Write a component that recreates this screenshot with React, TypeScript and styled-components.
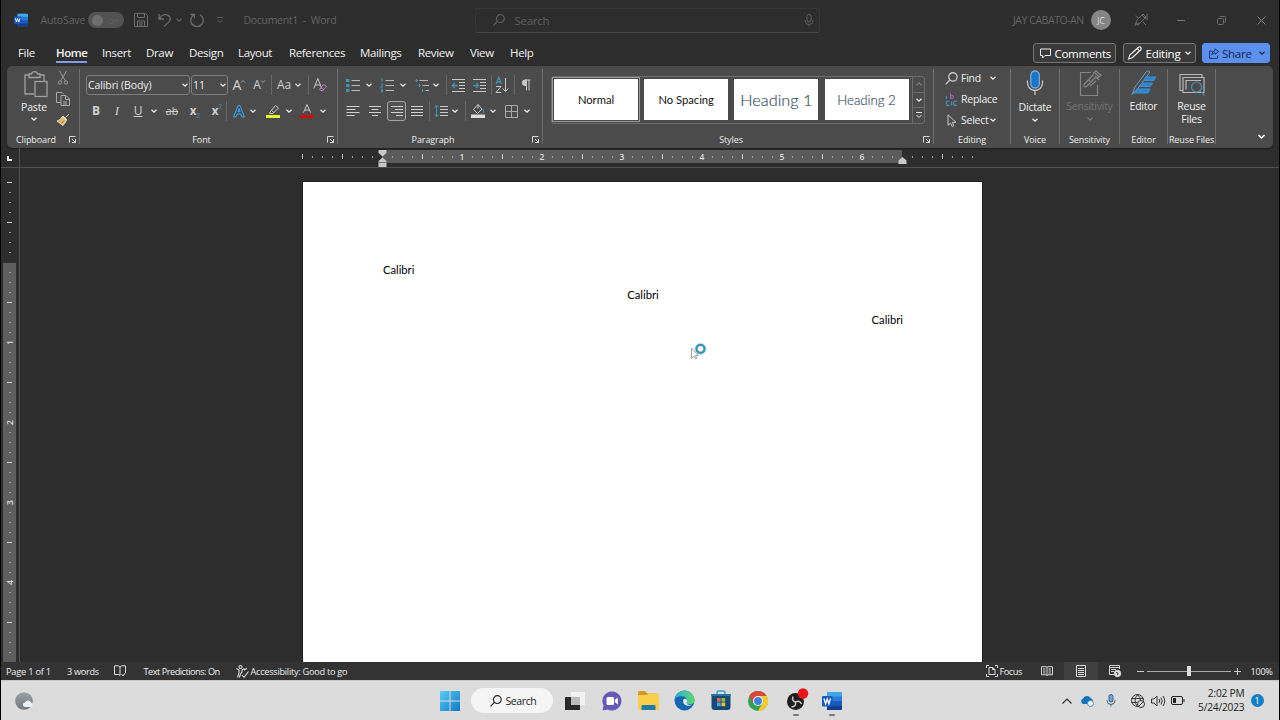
import React from "react";
import styled, { createGlobalStyle } from "styled-components";

const Global = createGlobalStyle`
  * { box-sizing: border-box; }
  body { margin: 0; background: #2d2d2d; font-family: "Open Sans", "Noto Sans", sans-serif; color: #f0f0f0; }
  svg { display: block; flex: none; overflow: visible; }
`;

const Screen = styled.div`
  width: 1280px; height: 720px; display: flex; flex-direction: column; overflow: hidden;
  background: #2d2d2d; border-left: 1px solid #000; border-right: 1px solid #000; position: relative;
`;

/* ---------- title bar ---------- */
const TitleBar = styled.header`
  height: 40px; flex: none; display: flex; align-items: center; padding-left: 12px;
  color: #646464; font-size: 10.5px; white-space: nowrap;
`;
const Slot = styled.div<{ $w?: number; $gap?: number }>`
  width: ${p => p.$w ?? 14}px; margin-left: ${p => p.$gap ?? 0}px; flex: none;
  display: flex; align-items: center; justify-content: center; white-space: nowrap;
`;
const TitleText = styled.span<{ $w: number; $gap: number; $ls?: number }>`
  width: ${p => p.$w}px; margin-left: ${p => p.$gap}px; flex: none; letter-spacing: ${p => p.$ls ?? 0}px;
`;
const Toggle = styled.div`
  width: 36px; height: 16px; margin-left: 5px; border-radius: 8px; background: #525252; flex: none;
  display: flex; align-items: center; gap: 5px; padding-left: 4px; font-size: 8px; color: #606060;
  &::before { content: ""; width: 11px; height: 11px; border-radius: 6px; background: #6f6f6f; }
`;
const SearchBox = styled.div`
  width: 345px; height: 25px; margin: 0 0 0 140px; flex: none; border: 1px solid #363636; border-bottom-color: #464646;
  border-radius: 3px; display: flex; align-items: center; padding: 0 5px 0 17px; color: #5e5e5e; font-size: 11.5px;
  span { flex: 1; padding-left: 10px; letter-spacing: -0.25px; }
`;
const Avatar = styled.div`
  width: 20px; height: 20px; margin-left: 7px; border-radius: 50%; background: #858585; color: #ddd; flex: none;
  font-size: 8.5px; display: flex; align-items: center; justify-content: center;
`;

/* ---------- tab row ---------- */
const TabRow = styled.nav`
  height: 26px; flex: none; display: flex; padding: 3px 9px 0 17px; font-size: 11.5px; color: #f2f2f2;
`;
const Tab = styled.div<{ $w: number; $active?: boolean }>`
  width: ${p => p.$w}px; flex: none; line-height: 20px; white-space: nowrap; font-weight: ${p => (p.$active ? 600 : 400)};
  letter-spacing: ${p => (p.$active ? -0.5 : -0.35)}px;
  span { display: inline-block; height: 20px; border-bottom: ${p => (p.$active ? "2px solid #7f9ce8" : "none")}; }
`;
const Actions = styled.div`
  margin-left: auto; display: flex; gap: 6.5px; height: 20px;
`;
const ActionButton = styled.button<{ $w: number; $primary?: boolean }>`
  width: ${p => p.$w}px; height: 20px; padding: 0 4px 0 6px; border-radius: 3px; display: flex; align-items: center; gap: 3px;
  font: 500 11.5px "Open Sans", sans-serif; letter-spacing: -0.25px; white-space: nowrap;
  border: 1px solid ${p => (p.$primary ? "#5c90ee" : "#757575")};
  background: ${p => (p.$primary ? "#5c90ee" : "#3a3a3a")}; color: ${p => (p.$primary ? "#14274d" : "#fff")};
  svg:last-child { margin-left: auto; }
`;

/* ---------- ribbon ---------- */
const Ribbon = styled.section`
  height: 82px; margin: 0 6px; flex: none; display: flex; background: #4b4b4b; border-radius: 5px;
  box-shadow: 0 1px 2px #1c1c1c; position: relative;
`;
const Group = styled.div<{ $w: number }>`
  width: ${p => p.$w}px; flex: none; display: flex; flex-direction: column; position: relative;
  &::after { content: ""; position: absolute; right: 0; top: 3px; bottom: 4px; width: 1px; background: #6e6e6e; }
`;
const GroupBody = styled.div`
  flex: 1; display: flex; min-height: 0;
`;
const GroupLabel = styled.div<{ $launch?: boolean }>`
  height: 16px; margin-bottom: 1px; display: flex; align-items: center; font-size: 9px; color: #eee; white-space: nowrap;
  letter-spacing: -0.1px;
  span { flex: 1; text-align: center; padding-right: ${p => (p.$launch ? 4 : 1)}px; }
  svg { margin: 1px 4px 0 0; }
`;
const ToolRows = styled.div`
  display: flex; flex-direction: column; padding-top: 8px; gap: 4px;
`;
const ToolRow = styled.div`
  display: flex; height: 22px; align-items: center; color: #ddd; font-size: 12px;
`;
const Divider = styled.i<{ $gap: number }>`
  width: 1px; height: 20px; margin-left: ${p => p.$gap}px; background: #676767; flex: none;
`;
const Combo = styled.div<{ $w: number; $gap: number }>`
  width: ${p => p.$w}px; height: 20px; margin-left: ${p => p.$gap}px; flex: none; border: 1px solid #7d7d7d; border-radius: 3px;
  display: flex; align-items: center; justify-content: space-between; padding: 0 1px 0 1px; font-size: 10.5px; color: #eee; white-space: nowrap;
  letter-spacing: -0.1px;
`;
const Selected = styled.div`
  width: 19px; height: 20px; margin-left: 5px; flex: none; border: 1px solid #a5a5a5; border-radius: 3px;
  display: flex; align-items: center; justify-content: center; background: #525252;
`;
const PasteColumn = styled.div`
  width: 54px; display: flex; flex-direction: column; align-items: center; padding-top: 5px; font-size: 10.5px; line-height: 16px;
  > svg:first-child { margin-left: 4px; }
  > span { margin-top: 1px; letter-spacing: -0.2px; }
  > svg:last-child { margin-top: 2px; }
`;
const ClipTools = styled.div`
  display: flex; flex-direction: column; align-items: center; margin-left: -5px; padding-top: 5px; gap: 7px;
`;
const BigButton = styled.div<{ $off?: boolean }>`
  flex: 1; display: flex; flex-direction: column; align-items: center; padding: 4px 1px 0 0; font-size: 10.5px; line-height: 13px;
  text-align: center; color: ${p => (p.$off ? "#737373" : "#f0f0f0")}; white-space: nowrap; letter-spacing: -0.25px;
  > span { margin-top: 4px; }
  > svg:nth-child(3) { margin-top: 4px; }
`;
const EditList = styled.div`
  display: flex; flex-direction: column; padding: 1.5px 0 0 11px; font-size: 10.5px; letter-spacing: -0.25px;
`;
const EditItem = styled.div<{ $gap?: number }>`
  height: 21.5px; display: flex; align-items: center;
  > svg:first-child { width: 13px; }
  span { margin: 0 ${p => p.$gap ?? 0}px 0 3px; }
`;
const Gallery = styled.div`
  width: 374px; height: 48px; margin: 10px 0 0 8px; border: 1px solid #6d6d6d; border-radius: 3px; display: flex;
`;
const Cards = styled.div`
  display: flex; gap: 6.2px; padding: 2px 0 0 2px; flex: 1;
`;
const StyleCard = styled.div<{ $sel?: boolean; $size: number; $heading?: boolean }>`
  width: 84px; height: 41px; flex: none; background: #fff; display: flex; align-items: center; justify-content: center;
  font-family: Lato, sans-serif; font-size: ${p => p.$size}px; font-weight: ${p => (p.$heading ? 300 : 400)};
  color: ${p => (p.$heading ? "#32495f" : "#111")}; white-space: nowrap;
  -webkit-text-stroke: ${p => (p.$heading ? "0.15px #32495f" : "0")};
  outline: ${p => (p.$sel ? "1px solid #999" : "none")}; outline-offset: 1px;
`;
const GalleryNav = styled.div`
  width: 12px; border-left: 1px solid #6d6d6d; display: flex; flex-direction: column;
  div { flex: 1; display: flex; align-items: center; justify-content: center; }
  div + div { border-top: 1px solid #6d6d6d; }
`;
const RibbonEnd = styled.div`
  flex: 1; display: flex; align-items: flex-end; justify-content: flex-end; padding: 0 8px 9px 0;
`;

/* ---------- rulers and document ---------- */
const RulerRow = styled.div`
  height: 20px; flex: none; border-bottom: 1px solid #505050; display: flex; position: relative;
`;
const TabStop = styled.div`
  width: 19px; border-right: 1px solid #505050; padding: 8px 0 0 6px;
`;
const HRuler = styled.div`
  display: flex; margin: 2px 0 0 277px; height: 13px;
`;
const HCell = styled.div<{ $fill: string }>`
  width: 10px; height: 13px; display: flex; align-items: center; justify-content: center;
  font-size: 8.5px; font-weight: 600; color: #ddd; background: ${p => p.$fill};
`;
const HTick = styled.i<{ $h: number }>`
  width: 1px; height: ${p => p.$h}px; background: ${p => (p.$h > 3 ? "#cfcfcf" : "#999")};
`;
const Marker = styled.div<{ $x: number; $y: number }>`
  position: absolute; left: ${p => p.$x}px; top: ${p => p.$y}px;
`;
const Workspace = styled.main`
  height: 494px; flex: none; display: flex; overflow: hidden;
`;
const VRuler = styled.div`
  width: 19px; flex: none; border-right: 1px solid #505050; padding: 9px 0 0 2px; display: flex; flex-direction: column;
`;
const VCell = styled.div<{ $fill: string }>`
  width: 13px; height: 10px; flex: none; display: flex; align-items: center; justify-content: center;
  background: ${p => p.$fill}; font-size: 8.5px; font-weight: 600; color: #ddd;
  span { transform: rotate(-90deg); }
`;
const VTick = styled.i<{ $w: number }>`
  height: 1px; width: ${p => p.$w}px; background: ${p => (p.$w > 3 ? "#cfcfcf" : "#999")};
`;
const Page = styled.article`
  width: 679px; height: 480px; margin: 14px 0 0 283px; background: #fff; padding: 79px 79px 0 80px; color: #000;
  font: 11.2px/25px Lato, sans-serif; position: relative;
  box-shadow: 0 0 0 1px #202020;
`;
const Para = styled.p<{ $align: string }>`
  margin: 0; text-align: ${p => p.$align}; height: 25px; line-height: 17px;
`;
const Pointer = styled.div`
  position: absolute; left: 387px; top: 159px;
`;

/* ---------- status bar ---------- */
const StatusBar = styled.footer`
  height: 18px; flex: none; background: #333; display: flex; align-items: center; font-size: 9.2px; padding-left: 5px;
  white-space: nowrap; color: #eee;
`;
const StatusText = styled.span<{ $w: number; $gap?: number; $ls?: number }>`
  width: ${p => p.$w}px; margin-left: ${p => p.$gap ?? 0}px; flex: none; letter-spacing: ${p => p.$ls ?? 0}px;
`;
const ViewButton = styled.div<{ $on?: boolean }>`
  width: 34px; height: 18px; flex: none; display: flex; align-items: center; justify-content: center;
  background: ${p => (p.$on ? "#3f3f3f" : "transparent")};
`;
const ZoomTrack = styled.div`
  width: 84px; height: 1px; background: #aaa; margin-left: 3px; flex: none; display: flex; align-items: center; justify-content: center;
  &::after { content: ""; width: 4px; height: 10px; background: #ddd; }
`;

/* ---------- taskbar ---------- */
const Taskbar = styled.div`
  height: 40px; flex: none; background: #dcdcdc; border-top: 1px solid #c8c8c8; display: flex; align-items: center; color: #222;
`;
const SearchPill = styled.div`
  width: 82px; height: 25px; margin-left: 11px; border-radius: 13px; background: #f5f5f5; flex: none;
  display: flex; align-items: center; padding-left: 19px; gap: 4px; font-size: 10.5px; letter-spacing: -0.4px;
`;
const TaskApp = styled.div<{ $gap: number; $run?: boolean }>`
  width: 22px; height: 39px; margin-left: ${p => p.$gap}px; flex: none; display: flex; align-items: center; justify-content: center; position: relative;
  &::after { content: ""; display: ${p => (p.$run ? "block" : "none")}; position: absolute; bottom: 4px; left: 8px; width: 6px; height: 2px; border-radius: 1px; background: #777; }
`;
const Clock = styled.div`
  width: 58px; margin-left: 2px; font-size: 10.2px; line-height: 13.5px; letter-spacing: -0.2px; flex: none;
  white-space: nowrap; display: flex; flex-direction: column; align-items: flex-end;
`;
const Badge = styled.div`
  width: 13px; height: 13px; margin-left: 6px; border-radius: 50%; background: #1180c4; color: #fff; font-size: 9px; line-height: 13px; text-align: center;
`;

/* ---------- icons ---------- */
type IconProps = { w?: number; h?: number; c?: string; sw?: number; children: React.ReactNode };
const Icon = ({ w = 14, h = 14, c = "#c8c8c8", sw = 1, children }: IconProps) => (
  <svg width={w} height={h} viewBox={`0 0 ${w} ${h}`} fill="none" stroke={c} strokeWidth={sw}>{children}</svg>
);
const Chevron = ({ c = "#eee", up = false }: { c?: string; up?: boolean }) => (
  <Icon w={6} h={4} c={c} sw={1.3}><path d={up ? "M.5 3.2 3 .8l2.5 2.4" : "M.5.8 3 3.2 5.5.8"} /></Icon>
);
const Chev = ({ gap }: { gap: number }) => <Slot $w={6} $gap={gap}><Chevron /></Slot>;
const Launcher = () => (
  <Icon w={7} h={7} c="#d8d8d8"><path d="M.5 6.500v-6h6M3 3l3.500 3.500M6.500 3v3.500H3" /></Icon>
);
const Lens = ({ c, s = 12 }: { c: string; s?: number }) => (
  <svg width={s} height={s} viewBox="0 0 12 12" fill="none" stroke={c} strokeWidth="1.2"><circle cx="7.300" cy="4.600" r="3.900" /><path d="M4.400 7.400.6 11.400" /></svg>
);
const MicSmall = ({ c, fill = "none" }: { c: string; fill?: string }) => (
  <Icon w={10} h={13} c={c}><rect x="3" y=".5" width="4" height="7.500" rx="2" fill={fill} /><path d="M1 6v.5a4 4 0 0 0 8 0V6M5 10.500v2" /></Icon>
);
const WordLogo = ({ s }: { s: number }) => (
  <svg width={s} height={s} viewBox="0 0 20 20">
    <rect x="5" y="1" width="15" height="18" rx="1.500" fill="#2b7cd3" />
    <path d="M5 1h13.500q1.500 0 1.500 1.500V5.500H5z" fill="#41a5ee" /><path d="M5 10h15v4.500H5z" fill="#185abd" /><path d="M5 14.500h15v3q0 1.500-1.500 1.500H5z" fill="#103f91" />
    <rect x="0" y="5" width="10.500" height="10.500" rx="1" fill="#185abd" />
    <path d="M2 7.500l1.600 5.400L5.200 8l1.700 4.900L8.500 7.500" fill="none" stroke="#fff" strokeWidth="1.300" />
  </svg>
);
const B = "#4590b0";

const Bullets = () => <Icon c="#b8b8b8"><path d="M5.500 2.500H14M5.500 7.500H14M5.500 12.500H14" /><g fill={B} stroke="none"><rect y="1" width="3.500" height="3" /><rect y="6" width="3.500" height="3" /><rect y="11" width="3.500" height="3" /></g></Icon>;
const Numbering = () => <Icon c="#b8b8b8"><path d="M5.500 2.500H14M5.500 7.500H14M5.500 12.500H14" /><path stroke={B} d="M1 1l1-.5V4M.5 6h2v1.500l-2 1.500h2.500M.5 11h2v3H.5M1 12.500h1.500" /></Icon>;
const Multi = () => <Icon c="#b8b8b8"><path d="M4.500 2.500H13M7.500 7.500H14M10.500 12.500H14" /><path stroke={B} d="M.5 2.500h2.500M1.500 1v3M3.500 7.500h2.500M4.500 6v3M7.500 11v3" /></Icon>;
const Dent = ({ flip }: { flip?: boolean }) => (
  <Icon><path d="M1 1.500H14M8 4.500H14M8 7.500H14M8 10.500h6M1 13.500H14" /><path stroke={B} strokeWidth="1.300" d={flip ? "M1 7.500h5.500M4 5l2.500 2.500L4 10" : "M6.500 7.500h-5M3.800 5 1.300 7.500 3.800 10"} /></Icon>
);
const Align = ({ d }: { d: string }) => <Icon c="#d0d0d0"><path d={d} /></Icon>;

const SortIcon = () => (
  <Icon w={14} h={16}><path stroke={B} strokeWidth="1.300" d="M1 7 3.800 .5 6.500 7M2 5h3.600" /><path d="M1 9.500h5L1 15.500h5.300M10.500 1v13M7.800 11.500l2.700 3 2.700-3" /></Icon>
);
const FontIcon = styled.span<{ $size?: number; $bold?: boolean; $italic?: boolean; $deco?: string }>`
  font-size: ${p => p.$size ?? 12}px; font-weight: ${p => (p.$bold ? 700 : 400)}; font-style: ${p => (p.$italic ? "italic" : "normal")};
  font-family: ${p => (p.$italic ? '"Liberation Serif", serif' : "inherit")};
  text-decoration: ${p => p.$deco ?? "none"}; line-height: 16px; color: #d0d0d0;
  sub, sup { font-size: 6.5px; color: ${B}; line-height: 0; }
  sub { vertical-align: -3px; }
  sup { vertical-align: 6px; }
`;
const GrowA = ({ s, up }: { s: number; up?: boolean }) => (
  <Slot $gap={up ? 4 : 6}><FontIcon $size={s}>A</FontIcon><Icon w={4} h={10} c="#8fa9b5"><path d={up ? "M0 2.500 2 .5l2 2" : "M0 .5l2 2 2-2"} /></Icon></Slot>
);

const hCells = Array.from({ length: 68 }, (_, i) => i);
const vCells = Array.from({ length: 49 }, (_, i) => i);
const hFill = (p: number) => {
  if (p === 0) return "linear-gradient(90deg, transparent 50%, #5b5b5b 50%)";
  if (p === 52) return "linear-gradient(90deg, #5b5b5b 50%, transparent 50%)";
  return p > 0 && p < 52 ? "#5b5b5b" : "transparent";
};
const vFill = (p: number) => {
  if (p === 0) return "linear-gradient(transparent 60%, #5e5e5e 60%)";
  return p > 0 ? "#5e5e5e" : "transparent";
};

const tabs: [string, number][] = [["File", 38], ["Home", 46], ["Insert", 44], ["Draw", 43], ["Design", 49], ["Layout", 51], ["References", 71], ["Mailings", 58], ["Review", 52], ["View", 40], ["Help", 40]];

export default function App() {
  return (
    <Screen>
      <Global />
      <TitleBar>
        <Slot $w={15}><WordLogo s={14} /></Slot>
        <TitleText $w={42} $gap={12.5} $ls={-0.15}>AutoSave</TitleText>
        <Toggle>Off</Toggle>
        <Slot $gap={10.5}><Icon c="#6c6c6c"><path d="M.5.5h11l2 2v11H.5zM3.500 .5v4h7v-4M3.500 13.500V8h7v5.500M5 10h4M5 12h4" /></Icon></Slot>
        <Slot $gap={10}><Icon c="#6c6c6c" sw={1.3}><path d="M1 1v5h5M1.500 5.500C4 1 9 .5 11.500 3.500c2 3 .5 5-5.500 10" /></Icon></Slot>
        <Slot $w={6} $gap={4}><Chevron c="#606060" /></Slot>
        <Slot $gap={8}><Icon c="#6c6c6c" sw={1.3}><path d="M10 1.700A6.300 6.300 0 1 1 4 1.700M.5 1.500H4.300V5.300" /></Icon></Slot>
        <Slot $w={6} $gap={12.5}><Icon w={6} h={7} c="#606060"><path d="M0 .5h6M.5 3 3 5.500 5.500 3" /></Icon></Slot>
        <TitleText $w={91} $gap={21} $ls={-0.3}>Document1 &nbsp;-&nbsp; Word</TitleText>
        <SearchBox><Lens c="#5e5e5e" /><span>Search</span><MicSmall c="#5e5e5e" /></SearchBox>
        <TitleText $w={71} $gap={193.5} $ls={-0.45}>JAY CABATO-AN</TitleText>
        <Avatar>JC</Avatar>
        <Slot $gap={22.5}><Icon c="#6c6c6c"><path d="M1 12.500 3 7l6-6 3 3-6 6zM8 2l4 4M2 10l3 2M1.500 3 5 5.500M9 9l3 3M13 7V1" /></Icon></Slot>
        <Slot $w={8} $gap={29}><Icon w={8} h={8} c="#777"><path d="M0 4.500h8" /></Icon></Slot>
        <Slot $w={9} $gap={32}><Icon w={9} h={9} c="#6c6c6c"><rect x=".5" y="2.500" width="6" height="6" rx="1" /><path d="M2.500 1q0-.5 1-.5h4q1 0 1 1v4q0 1-1 1" /></Icon></Slot>
        <Slot $w={9} $gap={31}><Icon w={9} h={9} c="#888"><path d="M.5.5l8 8M8.500 .5l-8 8" /></Icon></Slot>
      </TitleBar>

      <TabRow>
        {tabs.map(([t, w]) => (
          <Tab key={t} $w={w} $active={t === "Home"}><span>{t}</span></Tab>
        ))}
        <Actions>
          <ActionButton $w={83}><Icon w={11} h={11} c="#eee"><path d="M.5 1h10v6.500H5L2.500 10V7.500h-2z" /></Icon>Comments</ActionButton>
          <ActionButton $w={73}><Icon w={13} h={12} c="#eee" sw={1.2}><path d="M-1.300 11.800-.3 8.200 8.500.3q1.400-.8 2.300.2t0 2.300L2.300 10.800zM7.300 1.600l2.300 2.300" /></Icon>Editing<Chevron /></ActionButton>
          <ActionButton $w={68} $primary><Icon w={10} h={11} c="#1c3768"><path d="M3.500 3H.6v7.400H8.500V7.500M6 .8 9.500 3.500 6 6.300V4.800Q4 4.800 2.800 7 3 2.800 6 2.500z" /></Icon>Share<Chevron c="#14274d" /></ActionButton>
        </Actions>
      </TabRow>

      <Ribbon>
        <Group $w={73}>
          <GroupBody>
            <PasteColumn>
              <Icon w={24} h={27} c="#a0a0a0" sw={1.3}><path d="M5 4H1v19h9M16 4h4v6M5 6.500V3h2.500Q8 .7 10.500 .7T13.500 3H16v3.500z" /><rect x="11" y="10.500" width="12" height="15" /></Icon>
              <span>Paste</span><Chevron />
            </PasteColumn>
            <ClipTools>
              <Icon w={14} h={14} c="#999"><path d="M3.500 0l6 10M10.500 0l-6 10" /><circle cx="4" cy="11.500" r="1.700" /><circle cx="10" cy="11.500" r="1.700" /></Icon>
              <Icon w={14} h={14} c="#aaa"><path d="M5 10.500H.5v-10H6L7.500 2M5 3.500h5l3.500 3.500v6.500H5zM9.500 4v3.500H13M7 10h4M7 12h4" /></Icon>
              <Icon w={14} h={14} c="#ddd"><path d="M13 1 9.500 4.500M7 3l4 4" /><path d="M6.500 3.500 10.500 7.500 7 12.500 1 8Q4 7.500 6.500 3.500z" fill="#e2bd6c" stroke="#efe0b8" /><path d="M3 8.500l1-1M5.500 10.500 8 7.500" stroke="#8a6d32" /></Icon>
            </ClipTools>
          </GroupBody>
          <GroupLabel $launch><span>Clipboard</span><Launcher /></GroupLabel>
        </Group>

        <Group $w={258}>
          <GroupBody>
            <ToolRows>
              <ToolRow>
                <Combo $w={104} $gap={6}>Calibri (Body)<Chevron /></Combo>
                <Combo $w={37} $gap={1}>11<Chevron /></Combo>
                <GrowA s={14} up /><GrowA s={12} />
                <Divider $gap={5} />
                <Slot $gap={5}><FontIcon $size={12}>Aa</FontIcon></Slot><Chev gap={4} />
                <Divider $gap={7} />
                <Slot $gap={4}><Icon><path d="M.8 10.500 4.800 .5l4 10M2.200 7h5" /><path stroke="#c07fc4" d="M6.500 11.500l4-5 3 2-4 4.500zM8 9.800l3 2" /></Icon></Slot>
              </ToolRow>
              <ToolRow>
                <Slot $gap={9}><FontIcon $bold>B</FontIcon></Slot>
                <Slot $gap={7}><FontIcon $italic $size={13}>I</FontIcon></Slot>
                <Slot $gap={7}><FontIcon $deco="underline">U</FontIcon></Slot><Chev gap={6} />
                <Slot $gap={8}><FontIcon $size={10.5} $deco="line-through">ab</FontIcon></Slot>
                <Slot $gap={9}><FontIcon $size={11.5}><b>x</b><sub>2</sub></FontIcon></Slot>
                <Slot $gap={8}><FontIcon $size={11.5}><b>x</b><sup>2</sup></FontIcon></Slot>
                <Divider $gap={2} />
                <Slot $gap={5}><Icon w={12} h={13} c="#55a5dc"><path d="M.6 12 5 .6h2L11.400 12H9L8 9H4l-1 3zM4.800 6.800h2.400L6 3.500z" fill="#22506f" /></Icon></Slot><Chev gap={4} />
                <Slot $gap={10}><Icon w={14} h={14}><path d="M4 8 9.500 1.500l3 2.500L7 9.500H3.500zM5.500 6.500l2.500 2" /><rect x="0" y="11" width="14" height="3" fill="#e9f52a" stroke="none" /></Icon></Slot><Chev gap={6} />
                <Slot $gap={8}><Icon w={14} h={14}><path d="M3.500 8.500 7 .5l3.500 8M4.800 6h4.500" /><rect x="0" y="11" width="14" height="3" fill="#d00b0b" stroke="none" /></Icon></Slot><Chev gap={6} />
              </ToolRow>
            </ToolRows>
          </GroupBody>
          <GroupLabel $launch><span>Font</span><Launcher /></GroupLabel>
        </Group>

        <Group $w={205}>
          <GroupBody>
            <ToolRows>
              <ToolRow>
                <Slot $gap={8}><Bullets /></Slot><Chev gap={6} />
                <Slot $gap={8}><Numbering /></Slot><Chev gap={6} />
                <Slot $gap={9}><Multi /></Slot><Chev gap={4} />
                <Divider $gap={7} />
                <Slot $gap={4}><Dent /></Slot><Slot $gap={7}><Dent flip /></Slot>
                <Divider $gap={5} />
                <Slot $gap={3}><SortIcon /></Slot>
                <Divider $gap={5} />
                <Slot $gap={4}><Icon w={10} h={12}><path d="M5.500 1v10.500M8 1v10.500M9.500 1H4" /><path d="M5.500 1H4a2.500 2.500 0 0 0 0 5.500h1.500z" fill="#c8c8c8" /></Icon></Slot>
              </ToolRow>
              <ToolRow>
                <Slot $gap={8}><Align d="M.5 2.500h13M.5 5.500h9M.5 8.500h13M.5 11.500h8" /></Slot>
                <Slot $gap={8}><Align d="M1 2.500h12M3.500 5.500h7M1 8.500h12M4 11.500h6" /></Slot>
                <Selected><Align d="M1 2.500h12M5 5.500h8M1 8.500h12M6 11.500h7" /></Selected>
                <Slot $gap={4}><Align d="M1 2.500h12M1 5.500h12M1 8.500h12M1 11.500h12" /></Slot>
                <Divider $gap={5} />
                <Slot $gap={4}><Icon><path d="M6 2.500h8M6 5.500h8M6 8.500h8M6 11.500h8" /><path stroke={B} d="M2.500 1v12M.5 3.500l2-2.500 2 2.500M.5 10.500l2 2.500 2-2.500" /></Icon></Slot><Chev gap={4} />
                <Divider $gap={7} />
                <Slot $gap={5}><Icon h={14}><path d="M7 .5 2.500 5.500 6.500 9.500 11 5zM7 .5v4" /><path stroke={B} d="M11.500 5q2 2 1 4" /><rect y="10.500" width="14" height="3.500" fill="#ddd" stroke="none" /></Icon></Slot><Chev gap={5} />
                <Slot $gap={8}><Icon w={13} h={13} c="#aaa"><path d="M.5.5h12v12H.5zM6.500 .5v12M.5 6.500h12" /></Icon></Slot><Chev gap={6} />
              </ToolRow>
            </ToolRows>
          </GroupBody>
          <GroupLabel $launch><span>Paragraph</span><Launcher /></GroupLabel>
        </Group>

        <Group $w={391}>
          <GroupBody>
            <Gallery>
              <Cards>
                <StyleCard $size={11.2} $sel>Normal</StyleCard>
                <StyleCard $size={11.2}>No Spacing</StyleCard>
                <StyleCard $size={16.3} $heading>Heading 1</StyleCard>
                <StyleCard $size={13.2} $heading>Heading 2</StyleCard>
              </Cards>
              <GalleryNav>
                <div><Chevron c="#7d7d7d" up /></div><div><Chevron /></div>
                <div><Icon w={6} h={7} c="#eee"><path d="M0 .5h6M.5 3 3 5.500 5.500 3" /></Icon></div>
              </GalleryNav>
            </Gallery>
          </GroupBody>
          <GroupLabel $launch><span>Styles</span><Launcher /></GroupLabel>
        </Group>

        <Group $w={77}>
          <GroupBody>
            <EditList>
              <EditItem $gap={9}><Lens c="#c8c8c8" s={13} /><span>Find</span><Chevron /></EditItem>
              <EditItem><Icon w={12} h={13}><path stroke="#b565b8" d="M5 0v5.500M5 3q3-1.500 3 1t-3 1" /><path stroke={B} strokeWidth="1.300" d="M3.500 8.500Q.5 7.500.8 10.500t3 1.500M.8 6v-3M11.500 8.500Q8 7.500 8 10.500t3.500 1.500M6 8.500v4" /></Icon><span>Replace</span></EditItem>
              <EditItem $gap={2}><Icon w={12} h={13}><path d="M2.500 .8v10.500L5 9l1.700 3.500 1.700-.8L6.800 8.300h3.700z" /></Icon><span>Select</span><Chevron /></EditItem>
            </EditList>
          </GroupBody>
          <GroupLabel><span>Editing</span></GroupLabel>
        </Group>

        <Group $w={49}>
          <GroupBody><BigButton>
            <Icon w={18} h={27} c="#c5c5c5" sw={1.3}><path d="M1.500 10.500V13a7.500 7.500 0 0 0 15 0v-2.500M9 20.500V25" /><rect x="4.800" y="1" width="8.500" height="17" rx="4.200" fill="#1677c8" stroke="#79add8" /></Icon>
            <span>Dictate</span><Chevron />
          </BigButton></GroupBody>
          <GroupLabel><span>Voice</span></GroupLabel>
        </Group>

        <Group $w={60}>
          <GroupBody><BigButton $off>
            <Icon w={24} h={26} c="#858585" sw={1.2}><path d="M13 2.500H2.500v23h17V15M6 14.500 15.500 4.500M8 17 18.500 6.500M6 14.500q-1 2.500 2 2.500M10.500 10l2.500 2.500M15 3.500 18 .8l5 4.500-3.500 3M17 6l4 4M12 16l6-5M16.500 2.500l5 4.500" /></Icon>
            <span>Sensitivity</span><Chevron c="#777" />
          </BigButton></GroupBody>
          <GroupLabel><span>Sensitivity</span></GroupLabel>
        </Group>

        <Group $w={48}>
          <GroupBody><BigButton>
            <Icon w={26} h={26} c="#6f9fc4"><path d="M1 24.500 4 17 15.500 1.500q2-1.500 3.500 .5L8 17z" /><path d="M15 7h10l-2 3.500H12.500zM11 13h10.500l-2 3.500H8.500zM7.500 19H19l-2 4H3z" fill="#2a86d6" stroke="#3c8fd0" /></Icon>
            <span>Editor</span>
          </BigButton></GroupBody>
          <GroupLabel><span>Editor</span></GroupLabel>
        </Group>

        <Group $w={48}>
          <GroupBody><BigButton>
            <Icon w={26} h={26} c="#b8b8b8" sw={1.2}><path d="M4 20.500H1V4.500h22v3M4 7.500h21v15H4zM7 19.500v-9h15" /><circle cx="17.500" cy="17" r="5" stroke="#4b8fa8" fill="#4b4b4b" /><path d="M21 20.500l4.500 5" stroke="#4b8fa8" /></Icon>
            <span>Reuse<br />Files</span>
          </BigButton></GroupBody>
          <GroupLabel><span>Reuse Files</span></GroupLabel>
        </Group>
        <RibbonEnd><Icon w={7} h={5} c="#fff" sw={1.5}><path d="M.5 1 3.500 4l3-3" /></Icon></RibbonEnd>
      </Ribbon>

      <RulerRow>
        <TabStop><Icon w={5} h={5} c="#eee" sw={2}><path d="M1 0v4h4" /></Icon></TabStop>
        <HRuler>
          {hCells.map(i => {
            const p = i - 8;
            return (
              <HCell key={i} $fill={hFill(p)}>
                {p > 0 && p % 8 === 0 && p < 52 ? p / 8 : p === 0 || p === 52 ? null : <HTick $h={i % 4 === 0 ? 5 : 2} />}
              </HCell>
            );
          })}
        </HRuler>
        <Marker $x={377} $y={1.5}><Icon w={9} h={17} c="none"><path d="M.5 0h8v3L4.500 6.500.5 3zM.5 11 4.500 7.500l4 3.500v6h-8z" fill="#c8c8c8" /><path d="M0 12.500h9" stroke="#777" /></Icon></Marker>
        <Marker $x={897} $y={8.5}><Icon w={9} h={7} c="none"><path d="M.5 7V3.500L4.500 0l4 3.500V7z" fill="#c8c8c8" /></Icon></Marker>
      </RulerRow>

      <Workspace>
        <VRuler>
          {vCells.map(i => {
            const p = i - 8;
            return (
              <VCell key={i} $fill={vFill(p)}>
                {p > 0 && p % 8 === 0 && p < 40 ? <span>{p / 8}</span> : p === 0 ? null : <VTick $w={i % 4 === 0 ? 5 : 2} />}
              </VCell>
            );
          })}
        </VRuler>
        <Page>
          <Para $align="left">Calibri</Para>
          <Para $align="center">Calibri</Para>
          <Para $align="right">Calibri</Para>
          <Pointer><Icon w={18} h={20} c="#999" sw={0.9}><path d="M1.500 7v10.500L4 15l1.500 3 1.300-.6L5.300 14.500h3.200z" fill="#fff" /><circle cx="10.500" cy="7.800" r="4.100" stroke="#3a93b8" strokeWidth="2.600" /><circle cx="10.500" cy="7.800" r="5.600" stroke="#b5dff0" strokeWidth=".6" /></Icon></Pointer>
        </Page>
      </Workspace>

      <StatusBar>
        <StatusText $w={61} $ls={-0.2}>Page 1 of 1</StatusText>
        <StatusText $w={46} $ls={-0.3}>3 words</StatusText>
        <Slot><Icon w={12} h={12} c="#ddd"><path d="M6 10.500 4.500 9.500H.5V.8h4L6 2 7.500 .8h4v7M6 2v8.500M7.500 9l1.500 2 2.500-3.500" /></Icon></Slot>
        <StatusText $w={92} $gap={16.5} $ls={-0.5}>Text Predictions: On</StatusText>
        <Slot $w={13}><Icon w={13} h={13} c="#ddd" sw={1.1}><circle cx="4.500" cy="2" r="1.500" /><path d="M.5 3.500 3 5v3L1.500 12.500M8.500 3.500 6 5v2L4.500 9l-1.200 3.500M6 10l2 2.300L12.500 6.500M8 5l3-1.500" /></Icon></Slot>
        <StatusText $w={100} $gap={2} $ls={-0.27}>Accessibility: Good to go</StatusText>
        <Slot $w={13} $gap={634.5}><Icon w={12} h={12} c="#ddd"><path d="M.5 3V.5H3M9 .5h2.500V3M.5 9v2.500H3M11.500 9v2.500H9M3 2.500h3.500l2.500 2V9.500H3zM6.500 2.500v2H9" /></Icon></Slot>
        <StatusText $w={30.5} $gap={1.5} $ls={-0.45}>Focus</StatusText>
        <ViewButton><Icon w={12} h={10} c="#d5d5d5"><path d="M6 9.500 5 8.800H.5V.7H5l1 .6 1-.6h4.500v8.100H7zM6 1.300v8M2 3h2.500M2 5h2.500M2 7h2.500M7.500 3H10M7.500 5H10M7.500 7H10" /></Icon></ViewButton>
        <ViewButton $on><Icon w={10} h={12} c="#ddd"><path d="M.5.5h9v11h-9zM2 3.500h6M2 5.500h6M2 7.500h6M2 9.500h6" /></Icon></ViewButton>
        <ViewButton><Icon w={12} h={12} c="#d5d5d5"><path d="M5 9.500H.5v-9h10V4M.5 2.500h10M2 4.500h5M2 6.500h3" /><circle cx="8.500" cy="8.500" r="3.200" fill="#ddd" /><path d="M7 7.500l2 .5-.5 2" stroke="#444" /></Icon></ViewButton>
        <Slot $w={7} $gap={4.5}><Icon w={7} h={7} c="#ccc"><path d="M0 3.500h7" /></Icon></Slot>
        <ZoomTrack />
        <Slot $w={7} $gap={3}><Icon w={7} h={7} c="#ccc"><path d="M0 3.500h7M3.500 0v7" /></Icon></Slot>
        <StatusText $w={24} $gap={10} $ls={-0.3}>100%</StatusText>
      </StatusBar>

      <Taskbar>
        <Slot $w={18} $gap={14}>
          <svg width="18" height="18" viewBox="0 0 18 18"><defs><linearGradient id="wx" x2="0" y2="1"><stop stopColor="#9aa0a5" /><stop offset="1" stopColor="#73797e" /></linearGradient></defs><circle cx="9" cy="9" r="8.800" fill="url(#wx)" /><path d="M9.500 15a2.300 2.300 0 0 1 .5-4.500 3.200 3.200 0 0 1 6 0 2.300 2.300 0 0 1 0 4.500z" fill="#e8f1f7" /></svg>
        </Slot>
        <Slot $w={20} $gap={406.5}>
          <svg width="20" height="20"><defs><linearGradient id="win" x2="1" y2="1"><stop stopColor="#5ccdf2" /><stop offset="1" stopColor="#0b78c8" /></linearGradient></defs><path d="M0 0h9.500v9.500H0zM10.500 0H20v9.500h-9.500zM0 10.500h9.500V20H0zM10.500 10.500H20V20h-9.500z" fill="url(#win)" /></svg>
        </Slot>
        <SearchPill><Lens c="#222" />Search</SearchPill>
        <TaskApp $gap={11}><svg width="20" height="20"><path d="M6 1h14v13H6z" fill="#f2f2f2" /><path d="M0 6h15v13H0z" fill="#2a2a2a" /><path d="M6 6h9v8H6z" fill="#bcbcbc" /></svg></TaskApp>
        <TaskApp $gap={15}><svg width="20" height="20"><path d="M10 .5a9.500 9.500 0 1 1-4.500 17.900L.7 19.500 1.500 14.500A9.500 9.500 0 0 1 10 .5z" fill="#655ab8" /><rect x="4.500" y="6" width="7.500" height="8" rx="1.500" fill="#fff" /><path d="M12.800 9 15.800 6.500v7L12.800 11z" fill="#fff" /></svg></TaskApp>
        <TaskApp $gap={15}><svg width="21" height="19"><path d="M0 1.500Q0 0 1.500 0H7l2.500 2.500H19v4H0z" fill="#d89b1d" /><path d="M0 4h9l2-1.500h8.500q1.500 0 1.500 1.500v13q0 2-1.500 2h-18Q0 19 0 17z" fill="#f8d04c" /><path d="M3.500 19v-4q0-1 1-1h12q1 0 1 1v4z" fill="#2479a9" /></svg></TaskApp>
        <TaskApp $gap={14}>
          <svg width="21" height="21" viewBox="0 0 21 21"><defs><linearGradient id="ed" x2="1"><stop stopColor="#2aa9e0" /><stop offset="1" stopColor="#62d66c" /></linearGradient></defs><circle cx="10.500" cy="10.500" r="10" fill="#1565b0" /><path d="M.6 9A10 10 0 0 1 20.500 10.500Q20 15 14.500 14.500 11.800 14 13 12 13.500 6.800 8 6.300 3 6 .6 9z" fill="url(#ed)" /><path d="M9.500 9q-1.500 5 3 6.500 4 .8 6.200-.4-3.500.6-5.700-1.100-1-1.500.3-2.800Q12.500 8 9.500 9z" fill="#dff1f8" /></svg>
        </TaskApp>
        <TaskApp $gap={14.5}><svg width="20" height="21"><path d="M6 4.500V2.500Q6 1 7.500 1h5Q14 1 14 2.500v2" fill="none" stroke="#3d9fd2" strokeWidth="1.500" /><path d="M.5 4h19v13q0 3-3 3h-13q-3 0-3-3z" fill="#164a72" /><path d="M.5 4h19v2H.5z" fill="#2673a5" /><path d="M6 8h3.700v3.700H6z" fill="#e7654a" /><path d="M10.500 8h3.700v3.700h-3.700z" fill="#86bd42" /><path d="M6 12.500h3.700v3.700H6z" fill="#43a9e0" /><path d="M10.500 12.500h3.700v3.700h-3.700z" fill="#f0c244" /></svg></TaskApp>
        <TaskApp $gap={15}><svg width="20" height="20" viewBox="0 0 20 20"><circle cx="10" cy="10" r="10" fill="#34a350" /><path d="M10 10 1.300 5A10 10 0 0 1 18.700 5H10z" fill="#dc4437" /><path d="M10 5h8.700A10 10 0 0 1 10 20l4.300-7.500z" fill="#f6c92e" /><path d="M1.300 5 5.700 12.500 10 8V5z" fill="#dc4437" /><circle cx="10" cy="10" r="5" fill="#f4f4f4" /><circle cx="10" cy="10" r="3.900" fill="#3b82e0" /></svg></TaskApp>
        <TaskApp $gap={15.5} $run><svg width="20" height="20"><circle cx="9.500" cy="10.500" r="8.500" fill="#1f1d20" /><g fill="none" stroke="#c9c9c9" strokeWidth="1.500"><path d="M9.500 11q-4-1-2.500-5.500M9.500 11q4-2 6 2M9.500 11q1 4.500-4 5" /></g><circle cx="17" cy="2.500" r="5.200" fill="#ee1418" /></svg></TaskApp>
        <TaskApp $gap={14.5} $run><WordLogo s={20} /></TaskApp>
        <Slot $w={10} $gap={219}><Icon w={10} h={6} c="#333" sw={1.2}><path d="M.5 5.500 5 1l4.500 4.500" /></Icon></Slot>
        <Slot $gap={8}><svg width="14" height="12"><path d="M3 9a3 3 0 0 1 0-5.500A4.200 4.200 0 0 1 10.500 3 3.200 3.200 0 0 1 11 9z" fill="#1671b8" /><circle cx="10.500" cy="8.500" r="3" fill="#eef6fb" stroke="#4a90b8" /></svg></Slot>
        <Slot $w={10} $gap={11.5}><MicSmall c="#3f638c" fill="#6ea6dc" /></Slot>
        <Slot $gap={15}><Icon c="#333"><circle cx="6.500" cy="6.500" r="6" /><path d="M6.500 .5q-5 6 0 12M6.500 .5q3 3 3 6M.5 4.500h12M.5 8.500h6" /><circle cx="10" cy="10" r="3.500" fill="#dcdcdc" /><path d="M7.500 12.500l5-5" /></Icon></Slot>
        <Slot $gap={6}><Icon h={12} c="#333"><path d="M.5 4H3l3-3v10L3 8H.5zM8 4q1.500 2 0 4M10 2.500q2.500 3.500 0 7M12 1q3.500 5 0 10" /></Icon></Slot>
        <Slot $gap={6}><Icon w={14} h={9} c="#222"><rect x=".5" y=".5" width="11" height="8" rx="1.500" /><path d="M13 3v3" /><rect x="2" y="2" width="3" height="5" fill="#222" stroke="none" /></Icon></Slot>
        <Clock><span>2:02 PM</span><span>5/24/2023</span></Clock>
        <Badge>1</Badge>
      </Taskbar>
    </Screen>
  );
}
